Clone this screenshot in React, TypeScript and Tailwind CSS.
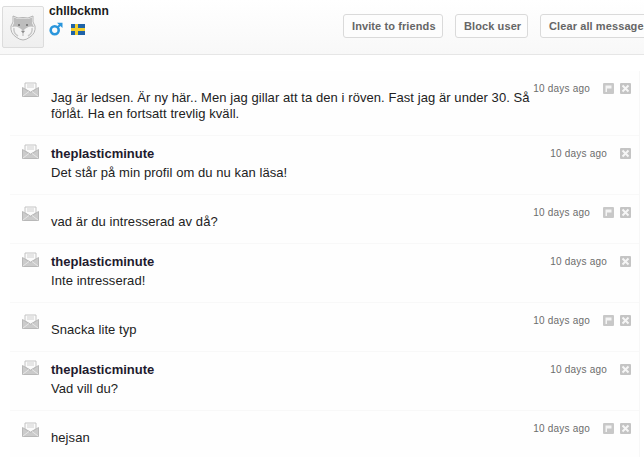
const messages = [
  { id: 1, text: 'Jag är ledsen. Är ny här.. Men jag gillar att ta den i röven. Fast jag är under 30. Så förlåt. Ha en fortsatt trevlig kväll.', mine: true },
  { id: 2, author: 'theplasticminute', text: 'Det står på min profil om du nu kan läsa!' },
  { id: 3, text: 'vad är du intresserad av då?', mine: true },
  { id: 4, author: 'theplasticminute', text: 'Inte intresserad!' },
  { id: 5, text: 'Snacka lite typ', mine: true },
  { id: 6, author: 'theplasticminute', text: 'Vad vill du?' },
  { id: 7, text: 'hejsan', mine: true },
];

function Avatar() {
  return (
    <div className="w-[42px] h-[42px] shrink-0 rounded-[2px] border border-[#dcdcdc] bg-gradient-to-b from-[#f7f7f7] to-[#efefef] flex items-center justify-center">
      <svg width="30" height="28" viewBox="0 0 30 28">
        <path d="M5 3 L10 5 Q15 4 20 5 L25 3 L25 9 L27 13 Q28 20 22 24 Q18 27 15 27 Q12 27 8 24 Q2 20 3 13 L5 9 Z" fill="#f4f4f4" stroke="#b4b4b4" />
        <path d="M6 4.5 L10 6 Q15 5 20 6 L24 4.5 L24 10 L26 14 Q20 12 15 18 Q10 12 4 14 L6 10 Z" fill="#bdbdbd" />
        <path d="M6 15 Q5 20 10 23 M24 15 Q25 20 20 23" fill="none" stroke="#c8c8c8" strokeWidth="1.5" />
        <circle cx="11" cy="12" r="1" fill="#6e6e6e" />
        <circle cx="19" cy="12" r="1" fill="#6e6e6e" />
        <path d="M13.5 18 L16.5 18 L15 20 Z M15 20 L15 23" fill="#8a8a8a" stroke="#8a8a8a" strokeWidth="0.6" />
      </svg>
    </div>
  );
}

function MaleIcon() {
  return (
    <svg width="14" height="14" viewBox="0 0 14 14" fill="none">
      <circle cx="5.7" cy="8.3" r="4" stroke="#2a96dc" strokeWidth="2.6" />
      <path d="M8.5 5.5 L11.5 2.5" stroke="#2a96dc" strokeWidth="2.2" />
      <path d="M8 0.8 H13.5 V6 Z" fill="#2a96dc" />
    </svg>
  );
}

function FlagIcon() {
  return (
    <svg width="14" height="11" viewBox="0 0 14 11">
      <rect width="14" height="11" fill="#1f63a8" />
      <rect x="4" width="3" height="11" fill="#f2cf2e" />
      <rect y="4" width="14" height="3" fill="#f2cf2e" />
    </svg>
  );
}

function MailIcon({ className = '' }: { className?: string }) {
  return (
    <svg width="17" height="15" viewBox="0 0 17 15" className={`shrink-0 ${className}`}>
      <path d="M3 7 L3 1 L14 1 L14 7 L8.5 10 Z" fill="#fbfbfb" stroke="#c4c4c4" />
      <path d="M5 3 H12 M5 5 H12" stroke="#d0d0d0" />
      <path d="M0.5 5.5 L8.5 10.5 L16.5 5.5 L16.5 14.5 L0.5 14.5 Z" fill="#cbcbcb" stroke="#b8b8b8" />
      <path d="M1 14 L7 9.5 M16 14 L10 9.5" stroke="#e8e8e8" />
    </svg>
  );
}

function FlagButton() {
  return (
    <svg width="11" height="11" viewBox="0 0 11 11" className="shrink-0">
      <rect width="11" height="11" rx="1" fill="#c8c8c8" />
      <path d="M2.5 2.5 H8.5 V5.5 H4 V9 H2.5 Z" fill="#f4f4f4" />
    </svg>
  );
}

function CloseButton() {
  return (
    <svg width="11" height="11" viewBox="0 0 11 11" className="shrink-0">
      <rect width="11" height="11" rx="1" fill="#c4c4c4" />
      <path d="M2.5 2.5 L8.5 8.5 M8.5 2.5 L2.5 8.5" stroke="#f6f6f6" strokeWidth="2" />
    </svg>
  );
}

function HeaderButton({ label, className = '' }: { label: string; className?: string }) {
  return (
    <button className={`h-[24px] shrink-0 rounded-[3px] border border-[#dadada] bg-[#fdfdfd] text-[11px] font-bold text-[#666666] tracking-[0.1px] whitespace-nowrap text-left pl-[8px] ${className}`}>
      {label}
    </button>
  );
}

export default function App() {
  return (
    <div className="w-[644px] h-[457px] overflow-hidden bg-white text-[13px] leading-4 tracking-[0.07px] text-[#222222] font-['Liberation_Sans',Arial,sans-serif]">
      {/* Header */}
      <div className="h-[55px] flex border-b border-[#e6e6e6] bg-gradient-to-b from-white to-[#f8f8f8] pl-[2px] pt-[6px]">
        <Avatar />
        <div className="ml-[5px] w-[294px] shrink-0">
          <div className="text-[12px] font-bold leading-[12px] mt-[-1px] text-[#1a1a1a]">chllbckmn</div>
          <div className="flex items-center gap-[8px] mt-[5px]">
            <MaleIcon />
            <FlagIcon />
          </div>
        </div>
        <div className="flex gap-[12px] mt-[8px]">
          <HeaderButton label="Invite to friends" className="w-[100px]" />
          <HeaderButton label="Block user" className="w-[73px]" />
          <HeaderButton label="Clear all messages" className="w-[120px]" />
        </div>
      </div>

      {/* Messages */}
      <div className="mt-[16px] ml-[10px] mr-[4px] border-r border-[#f7f7f7] bg-[#fefefe]">
        {messages.map((m) => (
          <div key={m.id} className="flex border-b border-[#f8f8f8] pl-[12px] pb-[13px] pt-[12px]">
            <MailIcon className={m.mine ? '-mt-px' : '-mt-[4px]'} />
            <div className={`ml-[12px] w-[482px] shrink-0 ${m.mine ? 'pt-[7px]' : 'mt-[-2px]'}`}>
              {m.author && <div className="font-bold tracking-normal text-[#1e1a2e] mb-[3px]">{m.author}</div>}
              <div>{m.text}</div>
            </div>
            <div className="flex-1 flex items-start justify-end text-[10px] leading-3 text-[#6c6c6c] tracking-[0.2px] whitespace-nowrap pr-[8px]">
              <span className="mr-[13px]">10 days ago</span>
              {m.mine && <FlagButton />}
              <span className={m.mine ? 'ml-[6px]' : ''}>
                <CloseButton />
              </span>
            </div>
          </div>
        ))}
      </div>
    </div>
  );
}
